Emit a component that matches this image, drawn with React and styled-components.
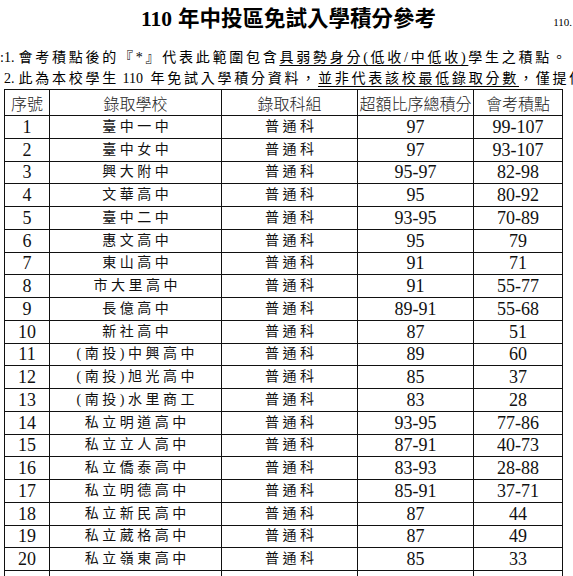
import styled, { createGlobalStyle } from "styled-components";

const GlobalStyle = createGlobalStyle`
  html, body {
    margin: 0;
    padding: 0;
    background: #fff;
  }
  body {
    font-family: "Liberation Serif", "Noto Sans CJK TC", serif;
    color: #000;
  }
`;

const Page = styled.div`
  width: 573px;
  height: 576px;
  overflow: hidden;
  background: #fff;
`;

const Header = styled.header`
  display: grid;
  grid-template-columns: 1fr auto 1fr;
  align-items: baseline;
  height: 48px;
  padding-top: 6px;
  box-sizing: border-box;
`;

const Title = styled.h1`
  grid-column: 2;
  margin: 0 0 0 4px;
  font-family: "Liberation Serif", "Noto Sans CJK TC", serif;
  font-size: 21.5px;
  font-weight: 700;
  line-height: 26px;
  white-space: nowrap;

  .year {
    margin-right: 6px;
  }
`;

const DateMark = styled.span`
  grid-column: 3;
  justify-self: end;
  font-family: "Liberation Serif", serif;
  font-size: 11px;
  white-space: nowrap;
  margin-right: 1px;
`;

const NoteLine = styled.p`
  margin: 0;
  height: ${(props) => (props.$first ? "20px" : "21px")};
  line-height: ${(props) => (props.$first ? "20px" : "21px")};
  padding-left: ${(props) => props.$indent || 0}px;
  font-family: "Liberation Serif", "Noto Sans CJK TC", serif;
  font-size: 14px;
  letter-spacing: 2.75px;
  white-space: nowrap;
  overflow: hidden;

  .num {
    letter-spacing: 0;
    margin-right: 4px;
  }

  u {
    text-decoration: underline;
    text-underline-offset: 3px;
    text-decoration-thickness: 1px;
  }
`;

const Table = styled.table`
  margin-left: 4px;
  width: 558px;
  table-layout: fixed;
  border-collapse: collapse;
`;

const HeadCell = styled.th`
  height: 25px;
  padding: 0;
  border: 1px solid #111;
  font-family: "Noto Sans CJK TC", sans-serif;
  font-size: 16px;
  font-weight: 300;
  color: #222;
  line-height: 1;
  text-align: center;
  white-space: nowrap;
  overflow: hidden;
`;

const Row = styled.tr`
  height: 22.75px;
`;

const Cell = styled.td`
  padding: 0;
  border: 1px solid #111;
  text-align: center;
  line-height: 1;
  white-space: nowrap;
  overflow: hidden;
  font-family: ${(props) =>
    props.$text
      ? `"Liberation Serif", "Noto Sans CJK TC", serif`
      : `"Liberation Serif", serif`};
  font-size: ${(props) => (props.$text ? "14px" : "18px")};
  letter-spacing: ${(props) => (props.$text ? "3.5px" : "0")};
  padding-left: ${(props) => (props.$text ? "3.5px" : "0")};
  color: #111;
`;

const columns = [45, 172, 136, 116, 89];
const headings = ["序號", "錄取學校", "錄取科組", "超額比序總積分", "會考積點"];

const rows = [
  ["臺中一中", "97", "99-107"],
  ["臺中女中", "97", "93-107"],
  ["興大附中", "95-97", "82-98"],
  ["文華高中", "95", "80-92"],
  ["臺中二中", "93-95", "70-89"],
  ["惠文高中", "95", "79"],
  ["東山高中", "91", "71"],
  ["市大里高中", "91", "55-77"],
  ["長億高中", "89-91", "55-68"],
  ["新社高中", "87", "51"],
  ["(南投)中興高中", "89", "60"],
  ["(南投)旭光高中", "85", "37"],
  ["(南投)水里商工", "83", "28"],
  ["私立明道高中", "93-95", "77-86"],
  ["私立立人高中", "87-91", "40-73"],
  ["私立僑泰高中", "83-93", "28-88"],
  ["私立明德高中", "85-91", "37-71"],
  ["私立新民高中", "87", "44"],
  ["私立葳格高中", "87", "49"],
  ["私立嶺東高中", "85", "33"],
];

export default function App() {
  return (
    <>
      <GlobalStyle />
      <Page>
        <Header>
          <Title>
            <span className="year">110</span>年中投區免試入學積分參考
          </Title>
          <DateMark>110.</DateMark>
        </Header>
        <NoteLine $first>
          <span className="num">:1.</span>會考積點後的『*』代表此範圍包含
          <u>具弱勢身分(低收/中低收)</u>學生之積點。
        </NoteLine>
        <NoteLine $indent={4}>
          <span className="num">2.</span>此為本校學生
          <span className="num"> 110 </span>年免試入學積分資料，
          <u>並非代表該校最低錄取分數</u>，僅提供
        </NoteLine>
        <Table>
          <colgroup>
            {columns.map((w, i) => (
              <col key={i} style={{ width: w }} />
            ))}
          </colgroup>
          <thead>
            <tr>
              {headings.map((h) => (
                <HeadCell key={h}>{h}</HeadCell>
              ))}
            </tr>
          </thead>
          <tbody>
            {rows.map((r, idx) => (
              <Row key={idx}>
                <Cell>{idx + 1}</Cell>
                <Cell $text>{r[0]}</Cell>
                <Cell $text>普通科</Cell>
                <Cell>{r[1]}</Cell>
                <Cell>{r[2]}</Cell>
              </Row>
            ))}
            <Row>
              <Cell />
              <Cell $text />
              <Cell $text />
              <Cell />
              <Cell />
            </Row>
          </tbody>
        </Table>
      </Page>
    </>
  );
}
